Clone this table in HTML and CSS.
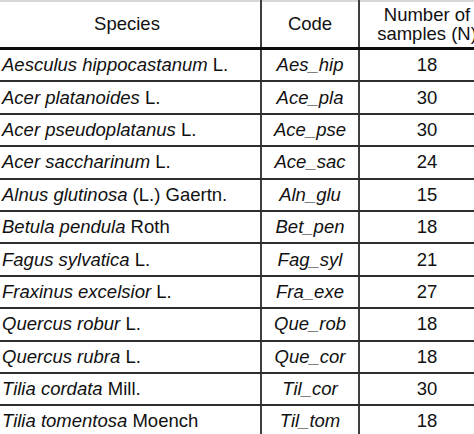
FILE: index.html
```html
<!DOCTYPE html>
<html>
<head>
<meta charset="utf-8">
<link rel="stylesheet" href="styles.css">
</head>
<body>
<table class="species-table">
  <thead>
    <tr>
      <th class="col-species">Species</th>
      <th class="col-code">Code</th>
      <th class="col-n">Number of<br>samples (N)</th>
    </tr>
  </thead>
  <tbody>
    <tr><td class="sp"><i>Aesculus hippocastanum</i> L.</td><td class="code"><i>Aes_hip</i></td><td class="n">18</td></tr>
    <tr><td class="sp"><i>Acer platanoides</i> L.</td><td class="code"><i>Ace_pla</i></td><td class="n">30</td></tr>
    <tr><td class="sp"><i>Acer pseudoplatanus</i> L.</td><td class="code"><i>Ace_pse</i></td><td class="n">30</td></tr>
    <tr><td class="sp"><i>Acer saccharinum</i> L.</td><td class="code"><i>Ace_sac</i></td><td class="n">24</td></tr>
    <tr><td class="sp"><i>Alnus glutinosa</i> (L.) Gaertn.</td><td class="code"><i>Aln_glu</i></td><td class="n">15</td></tr>
    <tr><td class="sp"><i>Betula pendula</i> Roth</td><td class="code"><i>Bet_pen</i></td><td class="n">18</td></tr>
    <tr><td class="sp"><i>Fagus sylvatica</i> L.</td><td class="code"><i>Fag_syl</i></td><td class="n">21</td></tr>
    <tr><td class="sp"><i>Fraxinus excelsior</i> L.</td><td class="code"><i>Fra_exe</i></td><td class="n">27</td></tr>
    <tr><td class="sp"><i>Quercus robur</i> L.</td><td class="code"><i>Que_rob</i></td><td class="n">18</td></tr>
    <tr><td class="sp"><i>Quercus rubra</i> L.</td><td class="code"><i>Que_cor</i></td><td class="n">18</td></tr>
    <tr><td class="sp"><i>Tilia cordata</i> Mill.</td><td class="code"><i>Til_cor</i></td><td class="n">30</td></tr>
    <tr><td class="sp"><i>Tilia tomentosa</i> Moench</td><td class="code"><i>Til_tom</i></td><td class="n">18</td></tr>
  </tbody>
</table>
</body>
</html>
```
FILE: styles.css
```css
html, body {
  margin: 0;
  padding: 0;
  background: #ffffff;
  overflow: hidden;
}

body {
  width: 474px;
  height: 434px;
}

.species-table {
  border-collapse: collapse;
  table-layout: fixed;
  width: 500px;
  margin-left: -6px;
  font-family: "Liberation Sans", Arial, sans-serif;
  font-size: 18.5px;
  color: #111111;
  border-top: 2px solid #d8d8d8;
}

.species-table th,
.species-table td {
  padding: 0;
  border-left: 2px solid #3e3e3e;
  border-bottom: 2px solid #2e2e2e;
  vertical-align: middle;
}

.species-table th:first-child,
.species-table td:first-child {
  border-left: none;
}

.species-table th {
  font-weight: normal;
  height: 43px;
  line-height: 19px;
  padding-bottom: 2px;
  text-align: center;
  border-bottom: 3px solid #0c0c0c;
}

.col-species { width: 266px; }
.col-code { width: 96px; }
.col-n { width: 134px; }

.species-table td {
  height: 30.4px;
  line-height: 20px;
}

.sp {
  text-align: left;
}

.species-table td.sp {
  padding-left: 8px;
}

.code,
.n {
  text-align: center;
}
```
